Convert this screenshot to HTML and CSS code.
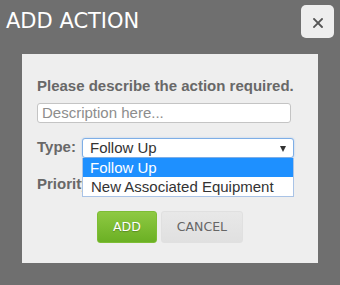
FILE: index.html
```html
<!DOCTYPE html>
<html>
<head>
<meta charset="utf-8">
<link rel="stylesheet" href="styles.css">
</head>
<body>
<div class="header">
  <div class="title">ADD ACTION</div>
  <div class="close">
    <svg width="10" height="10" viewBox="0 0 10 10"><path d="M1 1 L9 9 M9 1 L1 9" stroke="#555" stroke-width="1.8" stroke-linecap="square"/></svg>
  </div>
</div>
<div class="panel">
  <div class="label">Please describe the action required.</div>
  <div class="input">Description here...</div>
  <div class="row">
    <div class="label type-label">Type:</div>
    <div class="select">
      <span>Follow Up</span>
      <span class="arrow"></span>
      <div class="list">
        <div class="item selected">Follow Up</div>
        <div class="item">New Associated Equipment</div>
      </div>
    </div>
  </div>
  <div class="label prio">Priority:</div>
  <div class="buttons">
    <div class="btn add">ADD</div>
    <div class="btn cancel">CANCEL</div>
  </div>
</div>
</body>
</html>
```
FILE: styles.css
```css
html, body { margin: 0; padding: 0; }
body {
  background: #6f6f6f;
  width: 340px;
  height: 285px;
  overflow: hidden;
  font-family: "Liberation Sans", Arial, sans-serif;
}
.header {
  height: 54px;
  display: flex;
  justify-content: space-between;
  align-items: flex-start;
  padding: 0 6px;
}
.title {
  font-family: "DejaVu Sans", sans-serif;
  font-size: 21px;
  line-height: 24px;
  color: #fff;
  padding-top: 9px;
}
.close {
  margin-top: 5px;
  width: 33px;
  height: 33px;
  border-radius: 5px;
  background: #eeeeee;
  display: flex;
  align-items: center;
  justify-content: center;
}
.close svg { display: block; margin-top: 2px; }
.panel {
  margin-left: 22px;
  width: 296px;
  height: 209px;
  box-sizing: border-box;
  background: #eeeeee;
  padding: 23px 15px 20px;
}
.label {
  font-size: 15px;
  line-height: 17px;
  font-weight: bold;
  color: #686868;
  white-space: nowrap;
}
.input {
  margin-top: 9px;
  width: 254px;
  height: 20px;
  box-sizing: border-box;
  background: #fff;
  border: 1px solid #c4c4c4;
  border-radius: 3px;
  padding-left: 4px;
  font-size: 15px;
  line-height: 18px;
  color: #8d8d8d;
}
.row {
  margin-top: 15px;
  display: flex;
  align-items: flex-start;
}
.type-label { width: 45px; }
.select {
  position: relative;
  width: 212px;
  height: 20px;
  box-sizing: border-box;
  background: #fff;
  border: 1px solid #7eaee6;
  border-radius: 3px;
  box-shadow: 0 0 2px #a8c8ef;
  padding-left: 7px;
  font-size: 15px;
  line-height: 18px;
  color: #333;
}
.arrow {
  position: absolute;
  right: 7px;
  top: 7px;
  width: 0;
  height: 0;
  border-left: 3.5px solid transparent;
  border-right: 3.5px solid transparent;
  border-top: 6px solid #333;
}
.list {
  position: absolute;
  left: -1px;
  top: 19px;
  width: 212px;
  box-sizing: border-box;
  background: #fff;
  border: 1px solid #a9c3e6;
  border-top: none;
  z-index: 2;
}
.item {
  height: 19px;
  line-height: 19px;
  padding-left: 7px;
  color: #333;
  white-space: nowrap;
}
.item + .item { padding-left: 8px; }
.item.selected {
  background: #1e90ff;
  color: #fff;
}
.prio { margin-top: 17px; }
.buttons {
  margin-top: 19px;
  display: flex;
  justify-content: center;
  gap: 4px;
}
.btn {
  height: 32px;
  box-sizing: border-box;
  padding: 0 15px;
  border-radius: 3px;
  font-family: "DejaVu Sans", sans-serif;
  font-size: 12.5px;
  line-height: 30px;
  text-align: center;
}
.add {
  background: linear-gradient(#8ec942, #6bb024);
  border: 1px solid #7dbd34;
  color: #fff;
  text-shadow: 0 1px 1px rgba(0,0,0,0.25);
}
.cancel {
  background: linear-gradient(#e8e8e8, #e0e0e0);
  border: 1px solid #e0e0e0;
  color: #666;
}
```
